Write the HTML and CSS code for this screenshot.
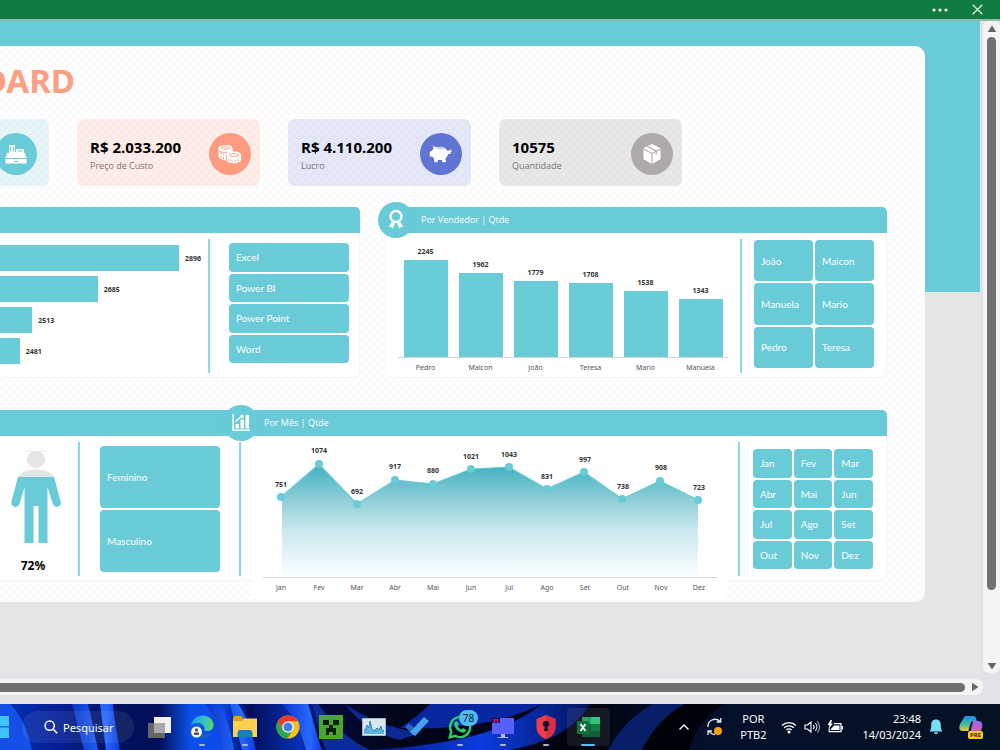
FILE: index.html
```html
<!DOCTYPE html>
<html lang="pt-BR">
<head>
<meta charset="utf-8">
<title>Dashboard</title>
<link rel="stylesheet" href="styles.css">
</head>
<body>
<header class="titlebar">
  <button class="win-btn" aria-label="Mais"><svg width="16" height="4" viewBox="0 0 16 4"><g fill="#fff"><circle cx="2" cy="2" r="1.6"/><circle cx="8" cy="2" r="1.6"/><circle cx="14" cy="2" r="1.6"/></g></svg></button>
  <button class="win-btn" aria-label="Fechar"><svg width="11" height="11" viewBox="0 0 11 11"><path d="M.7.7l9.6 9.6M10.3.7L.7 10.3" stroke="#d5eadd" stroke-width="1.4"/></svg></button>
</header>

<div class="workspace">
  <main class="sheet">
    <div class="board">
      <h1 class="title"><span>DARD</span></h1>

      <section class="kpis">
        <article class="kpi kpi-teal">
          <span class="kpi-icon"><svg width="22" height="20" viewBox="0 0 22 20"><path fill="#fff" d="M2 9h2V1h6v7h1V5h8v4h1l1.500 5H.5zM.5 15h21v4.500H.5z"/><path stroke="#69cad8" fill="none" d="M9 17.500h4M5.500 2.500v5M8.500 2.500v5M12.500 7h5"/></svg></span>
        </article>
        <article class="kpi kpi-coral">
          <div><strong class="kpi-value">R$ 2.033.200</strong><span class="kpi-label">Preço de Custo</span></div>
          <span class="kpi-icon"><svg width="24" height="20" viewBox="0 0 24 20"><path fill="#fff" d="M.5 4C.5 2.200 4 1 7.500 1s7 1.200 7 3v3.500c4-.5 8.500.5 8.500 3.200V16c0 2-3.500 3.200-7.500 3.200-3 0-6-1-7-2.700C4 16 .5 14 .5 12z"/><path fill="none" stroke="#fc9b7f" stroke-width=".9" d="M3 4c0-1.500 9-1.500 9 0s-9 1.500-9 0zM11 11c0-1.800 9.500-1.800 9.500 0s-9.500 1.800-9.500 0zM1 7c2 1.500 5 1.800 8 1.300M8.500 10.500v6M3 8.500v2M5.500 9.500v2M11 15v2M14 16v2M17 16v2M20 15v2M3 12v2M5.500 13v2"/></svg></span>
        </article>
        <article class="kpi kpi-blue">
          <div><strong class="kpi-value">R$ 4.110.200</strong><span class="kpi-label">Lucro</span></div>
          <span class="kpi-icon"><svg width="24" height="20" viewBox="0 0 24 20"><path fill="#fff" d="M4 2l4 1.500C11 2 16 2.500 18 6.500h2.500c.7-1.500 2-1 1.500 0 1 .2 1 1 0 1.300L21 10h-2c-.5 2.500-1.500 3.500-2.500 4.200l.5 4h-3.500l-.5-2.200H9l-.5 2.200H5.500L5 14.500 3 12.500H.8V7.800L2.500 7 4.500 4.700z"/><path d="M9 4.500c2-.9 4-.7 5.500.4" fill="none" stroke="#6074d1" stroke-width=".8"/></svg></span>
        </article>
        <article class="kpi kpi-gray">
          <div><strong class="kpi-value">10575</strong><span class="kpi-label">Quantidade</span></div>
          <span class="kpi-icon"><svg width="20" height="22" viewBox="0 0 20 22"><path fill="#fff" d="M10 1l8.500 4.200v11L10 21 1.500 16.200v-11z"/><path d="M1.500 6L10 10.500 18.500 6M10 10.500V21M5.500 3.500l8.700 4.700v3.500" fill="none" stroke="#aeaaa9" stroke-width="1.100"/></svg></span>
        </article>
      </section>

      <section class="row row-top">
        <article class="panel">
          <div class="panel-head"></div>
          <div class="panel-body">
            <div class="hbars">
              <div class="hbar"><i style="width:86%"></i><b>2896</b></div>
              <div class="hbar"><i style="width:47%"></i><b>2685</b></div>
              <div class="hbar"><i style="width:15.500%"></i><b>2513</b></div>
              <div class="hbar"><i style="width:9.500%"></i><b>2481</b></div>
            </div>
            <span class="divider"></span>
            <div class="slicer slicer-products">
              <button>Excel</button><button>Power BI</button><button>Power Point</button><button>Word</button>
            </div>
          </div>
        </article>

        <article class="panel">
          <div class="panel-head">
            <span class="badge"><svg width="18" height="22" viewBox="0 0 18 22"><circle cx="9" cy="7.500" r="5.500" fill="none" stroke="#fff" stroke-width="2.400"/><path fill="#fff" d="M4.500 13l3.300 1.800-2.300 5-1.200-2.100-2.500.4zM13.500 13l-3.300 1.800 2.300 5 1.200-2.100 2.500.4z"/></svg></span>
            <h2>Por Vendedor | Qtde</h2>
          </div>
          <div class="panel-body">
            <div class="vchart">
              <div class="plot">
                <div class="col"><b>2245</b><i style="height:97px"></i></div>
                <div class="col"><b>1962</b><i style="height:84px"></i></div>
                <div class="col"><b>1779</b><i style="height:76px"></i></div>
                <div class="col"><b>1708</b><i style="height:74px"></i></div>
                <div class="col"><b>1538</b><i style="height:66px"></i></div>
                <div class="col"><b>1343</b><i style="height:58px"></i></div>
              </div>
              <div class="cats"><span>Pedro</span><span>Maicon</span><span>João</span><span>Teresa</span><span>Mario</span><span>Manuela</span></div>
            </div>
            <span class="divider"></span>
            <div class="slicer slicer-sellers">
              <button>João</button><button>Maicon</button><button>Manuela</button><button>Mario</button><button>Pedro</button><button>Teresa</button>
            </div>
          </div>
        </article>
      </section>

      <section class="row row-bottom">
        <article class="panel panel-gender">
          <div class="panel-head"></div>
          <div class="panel-body">
            <div class="person">
              <svg width="50" height="94" viewBox="0 0 50 94"><path d="M14 1.200h22" stroke="#ededed"/><ellipse cx="25" cy="9.500" rx="9" ry="8.500" fill="#e5e5e5"/><path d="M7 27c5-10 31-10 36 0z" fill="#e5e5e5"/><path fill="#69cad8" d="M7 27h36l6.800 25c1 5-5.800 7-8 2L36.500 37v56H27.500V56h-5v37H13.500V37L8.500 54c-2 5-9 3-8.200-2z"/></svg>
              <strong>72%</strong>
            </div>
            <span class="divider"></span>
            <div class="slicer slicer-gender"><button>Feminino</button><button>Masculino</button></div>
            <span class="divider"></span>
          </div>
        </article>

        <article class="panel panel-month">
          <div class="panel-head">
            <span class="badge"><svg width="18" height="18" viewBox="0 0 18 18"><path d="M1.200 0v16.300H18" fill="none" stroke="#fff" stroke-width="1.600"/><path fill="#fff" d="M3.500 10h3.500v4.500H3.500zM8.500 5.500H12v9H8.500zM13.500 1H17v13.500h-3.500z"/><path d="M3.500 7.500L10 2" stroke="#fff" stroke-width="1.100"/><circle cx="10" cy="2.300" r="1.700" fill="#fff"/></svg></span>
            <h2>Por Mês | Qtde</h2>
          </div>
          <div class="panel-body">
            <svg class="area-chart" viewBox="253 436 474 162" role="img" aria-label="Quantidade por mês">
              <defs><linearGradient id="fade" gradientUnits="userSpaceOnUse" x1="0" y1="464" x2="0" y2="577"><stop offset="0" stop-color="#3fb0c1"/><stop offset=".3" stop-color="#8accd6"/><stop offset=".6" stop-color="#cdeaef"/><stop offset="1" stop-color="#fafeff"/></linearGradient></defs>
              <path fill="url(#fade)" d="M282 577V497L319 464l38 40 38-24 38 4 38-15 38-2 38 22 37-17 38 27 38-18 38 19V577z"/>
              <path fill="none" stroke="#69cad8" stroke-width="1.200" d="M281 497L319 464l38 40 38-24 38 4 38-15 38-2 38 22 37-17 38 27 38-18 38 19"/>
              <path d="M263 577.500h454" stroke="#d4d4d4"/>
              <g fill="#69cad8"><circle cx="281" cy="497" r="4"/><circle cx="319" cy="464" r="4"/><circle cx="357" cy="504" r="4"/><circle cx="395" cy="480" r="4"/><circle cx="433" cy="484" r="4"/><circle cx="471" cy="469" r="4"/><circle cx="509" cy="467" r="4"/><circle cx="547" cy="489" r="4"/><circle cx="584" cy="472" r="4"/><circle cx="622" cy="499" r="4"/><circle cx="660" cy="481" r="4"/><circle cx="698" cy="500" r="4"/></g>
              <g class="vals"><text x="281" y="487">751</text><text x="319" y="453">1074</text><text x="357" y="494">692</text><text x="395" y="469">917</text><text x="433" y="473">880</text><text x="471" y="459">1021</text><text x="509" y="457">1043</text><text x="547" y="479">831</text><text x="585" y="462">997</text><text x="623" y="489">738</text><text x="661" y="470">908</text><text x="699" y="490">723</text></g>
              <g class="months"><text x="281" y="590">Jan</text><text x="319" y="590">Fev</text><text x="357" y="590">Mar</text><text x="395" y="590">Abr</text><text x="433" y="590">Mai</text><text x="471" y="590">Jun</text><text x="509" y="590">Jul</text><text x="547" y="590">Ago</text><text x="585" y="590">Set</text><text x="623" y="590">Out</text><text x="661" y="590">Nov</text><text x="699" y="590">Dez</text></g>
            </svg>
            <span class="divider"></span>
            <div class="slicer slicer-months">
              <button>Jan</button><button>Fev</button><button>Mar</button><button>Abr</button><button>Mai</button><button>Jun</button><button>Jul</button><button>Ago</button><button>Set</button><button>Out</button><button>Nov</button><button>Dez</button>
            </div>
          </div>
        </article>
      </section>
    </div>
  </main>
  <div class="vscroll">
    <svg width="10" height="8" viewBox="0 0 10 8"><path fill="#666" d="M5 .5L9.300 7H.7z"/></svg>
    <div class="vtrack"><span class="vthumb"></span></div>
    <svg width="10" height="8" viewBox="0 0 10 8"><path fill="#666" d="M5 7.500L9.300 1H.7z"/></svg>
  </div>
</div>
<div class="hscroll">
  <div class="htrack"><span class="hthumb"></span><svg width="8" height="10" viewBox="0 0 8 10"><path fill="#666" d="M7.500 5L1 9.300V.7z"/></svg></div>
</div>

<footer class="taskbar">
  <svg class="wallpaper" viewBox="0 0 1000 46" preserveAspectRatio="none" aria-hidden="true">
    <defs>
      <linearGradient id="wp" x1="0" x2="1" y1="0" y2="0"><stop offset="0" stop-color="#0632b8"/><stop offset=".06" stop-color="#031e92"/><stop offset=".12" stop-color="#02115c"/><stop offset=".16" stop-color="#02105c"/><stop offset=".19" stop-color="#0b50e8"/><stop offset=".22" stop-color="#0a4bea"/><stop offset=".25" stop-color="#020e58"/><stop offset=".3" stop-color="#0830b8"/><stop offset=".32" stop-color="#020a3c"/><stop offset=".4" stop-color="#020618"/><stop offset=".5" stop-color="#010520"/><stop offset=".57" stop-color="#00020c"/><stop offset=".7" stop-color="#03102a"/><stop offset="1" stop-color="#041224"/></linearGradient>
      <linearGradient id="ray" x1="0" x2="1" y1="0" y2="0"><stop offset="0" stop-color="#0a36c8"/><stop offset=".7" stop-color="#2868ff"/><stop offset="1" stop-color="#0b3cd8"/></linearGradient>
      <linearGradient id="sweep" x1="0" x2="1" y1="0" y2="0"><stop offset="0" stop-color="#031a80"/><stop offset=".5" stop-color="#0a3ce0"/><stop offset="1" stop-color="#03145a"/></linearGradient>
    </defs>
    <path fill="url(#wp)" d="M0 0h1000v46H0z"/>
    <path fill="#1450e8" d="M0 0h10c12 12 18 28 22 46H0z"/>
    <path fill="url(#ray)" d="M72 0h16c4 14 6 30 10 46H84zM100 0h13c1 15 4 30 7 46h-14z"/>
    <path fill="url(#ray)" d="M206 0h14c8 14 11 30 14 46h-12c-2-20-8-34-16-46zM230 0h8c8 10 14 28 18 46h-14z"/>
    <path fill="url(#ray)" d="M282 0h26c5 14 8 30 14 46h-16c-5-18-10-32-24-46z"/>
    <path fill="#0b2d9b" d="M312 0h6c14 20 30 36 52 46h-44c-6-14-9-30-14-46z"/>
    <path fill="#0a2a92" d="M345 0c20 14 44 24 75 29l-20 7c-26-7-41-18-55-36z"/>
    <path fill="url(#sweep)" d="M370 46c60-4 130-12 172-46h48c-15 25-40 38-80 46z"/>
    <path fill="#0726a0" d="M430 0h112c-40 20-90 26-142 24 12-8 22-16 30-24z"/>
    <path fill="#061f68" d="M608 46c12-22 26-36 45-46h32c-20 10-35 28-43 46z"/>
    <path fill="#000209" d="M642 46c12-22 25-36 43-46h40c-18 10-30 26-36 46z"/>
  </svg>
  <button class="start" aria-label="Iniciar"><svg width="9" height="22" viewBox="0 0 9 22"><path fill="#3fc3fb" d="M0 0h9v10.300H0zM0 11.500h9V22H0z"/></svg></button>
  <label class="search"><svg width="14" height="14" viewBox="0 0 14 14"><circle cx="5.700" cy="5.700" r="4.600" fill="none" stroke="#fff" stroke-width="1.500"/><path d="M9.200 9.200l4 4" stroke="#fff" stroke-width="1.600"/></svg><input type="text" placeholder="Pesquisar" aria-label="Pesquisar"></label>
  <nav class="apps">
    <button class="app" aria-label="Visão de tarefas"><svg width="24" height="24" viewBox="0 0 24 24"><path fill="#f1f1f1" d="M7 2h17v16H7z"/><path fill="#666" d="M1 8h17v15H1z"/><path fill="#a9a9a9" d="M7 8h11v10H7z"/></svg></button>
    <button class="app open" aria-label="Edge"><svg width="24" height="24" viewBox="0 0 24 24"><defs><linearGradient id="ed" x1="0" x2="1"><stop offset="0" stop-color="#1b9de2"/><stop offset=".6" stop-color="#34c1c5"/><stop offset="1" stop-color="#65d75b"/></linearGradient></defs><path fill="#1067b8" d="M1 12c0 7 5 11.500 11 11.500 4 0 8-2 9.500-5-5 2-11 0-11-5l1-5z"/><path fill="url(#ed)" d="M1 11C2 4 7 .5 12.500.5 19 .5 23.500 5 23.500 10c0 5-4 6.500-7 6-4-.6-1-2-2.500-4.500C11.500 7 4 7 1 11z"/><circle cx="6.500" cy="17" r="5.500" fill="#f5f5f5"/><circle cx="6.500" cy="15" r="1.700" fill="#555"/><path fill="#555" d="M4 17.500h5v2.500H4z"/></svg></button>
    <button class="app open" aria-label="Explorador"><svg width="24" height="24" viewBox="0 0 24 24"><path fill="#e2a112" d="M0 2.500L1 1h7l2.500 3v4H0z"/><path fill="#ffd152" d="M0 6h9l2-2.500h13V22H0z"/><path fill="#147fc5" d="M4.500 22v-4.500L6 15h12l1.500 2.500V22z"/></svg></button>
    <button class="app" aria-label="Chrome"><svg width="24" height="24" viewBox="0 0 24 24"><circle cx="12" cy="12" r="11.500" fill="#fbc116"/><path fill="#e33b2e" d="M2 6.200A11.500 11.500 0 0 1 22 6.200H12L7 15z"/><path fill="#2da44f" d="M2 6.200a11.500 11.500 0 0 0 9.500 17.300L17 14.500l-10 .5z"/><circle cx="12" cy="12" r="5.800" fill="#fff"/><circle cx="12" cy="12" r="4.500" fill="#3e7ff0"/></svg></button>
    <button class="app" aria-label="Minecraft"><svg width="24" height="24" viewBox="0 0 24 24"><path fill="#4ba52f" d="M0 0h24v24H0z"/><path fill="#08200a" d="M4 5h6v5H4zM14 5h6v5h-6zM10 10h4v3h3v7h-3v-3h-4v3H7v-7h3z"/></svg></button>
    <button class="app" aria-label="Monitor"><svg width="24" height="24" viewBox="0 0 24 24"><path fill="#d9e7ed" stroke="#a9b8c0" d="M.5 3.500h23v17H.5z"/><path fill="#5cb4e5" d="M2 19v-4l2-1 1-4 2 3 1-7 2 8 2 2 3-3 2 2 2-4 1 4 2 1v3z"/><path stroke="#2785bd" fill="none" d="M2 15l2-1 1-4 2 3 1-7 2 8 2 2 3-3 2 2 2-4 1 4 2 1"/></svg></button>
    <button class="app" aria-label="To Do"><svg width="24" height="24" viewBox="0 0 24 24"><path fill="#2564c0" d="M0 12l4-4 8 7-4 5z"/><path fill="#47a2ee" d="M5 17L19 2l5 4L10 21z"/></svg></button>
    <button class="app open" aria-label="WhatsApp"><svg width="24" height="24" viewBox="0 0 24 24"><path fill="none" stroke="#28d366" stroke-width="2.400" d="M1.800 22.300l1.500-5.600A10 10 0 1 1 7.300 20.800z"/><path fill="#28d366" d="M7.500 6.500h2l1.300 3-1.200 1.600c1 1.800 2.200 2.800 4 3.500l1.300-1.500 3 1.500c0 3-2 3.500-4 3C10 16.500 7 13.500 6.200 9.500c0-1.500.5-2.500 1.300-3z"/></svg><span class="count">78</span></button>
    <button class="app open" aria-label="Área remota"><svg width="24" height="24" viewBox="0 0 24 24"><path fill="#5560ff" d="M1 3h22v16H1z"/><path fill="#b1bcc9" d="M10 19h4v3h3v1H7v-1h3z"/><path fill="#2b133c" d="M1 3h8v5H1z"/><path stroke="#f30db1" stroke-width="1.500" d="M3.500 4v3.500M6.500 4v3.500"/></svg></button>
    <button class="app open" aria-label="Segurança"><svg width="24" height="24" viewBox="0 0 24 24"><path fill="#ef3c4b" d="M12 0l9.500 4v8c0 6-4 10-9.500 12C6.500 22 2.500 18 2.500 12V4z"/><path fill="#d92e43" d="M12 0l9.500 4v8c0 6-4 10-9.500 12z"/><path fill="#180d2e" d="M12 6a3 3 0 0 1 1.300 5.800L14 16h-4l.7-4.200A3 3 0 0 1 12 6z"/></svg></button>
    <button class="app open active" aria-label="Excel"><svg width="24" height="24" viewBox="0 0 24 24"><path fill="#21a366" d="M5 2h18v7H5z"/><path fill="#33c481" d="M14 2h9v7h-9z"/><path fill="#185c37" d="M5 9h18v13H5z"/><path fill="#107c41" d="M14 9h9v7h-9z"/><path fill="#0d703a" d="M0 6h12v13H0z"/><path stroke="#fff" stroke-width="1.800" d="M3.500 9l5 7M8.500 9l-5 7"/></svg></button>
  </nav>
  <div class="tray">
    <button aria-label="Ícones ocultos"><svg width="12" height="8" viewBox="0 0 12 8"><path d="M1.500 6.500L6 2l4.500 4.500" fill="none" stroke="#fff" stroke-width="1.400"/></svg></button>
    <button aria-label="Atualização"><svg width="18" height="20" viewBox="0 0 18 20"><path d="M2 10a7 7 0 0 1 12-5.500M14.700 1v4h-4M9 17.500a7 7 0 0 1-6-3.500M2 18v-4h4" fill="none" stroke="#eee" stroke-width="1.300"/><circle cx="12" cy="14" r="4" fill="#ff9c14"/></svg></button>
    <button class="lang">POR<br>PTB2</button>
    <button class="status" aria-label="Rede, som e bateria">
      <svg width="16" height="14" viewBox="0 0 16 14"><g fill="none" stroke="#fff" stroke-width="1.200"><path d="M1 5.500a10 10 0 0 1 14 0M3.200 7.800a7 7 0 0 1 9.600 0M5.400 10a4 4 0 0 1 5.200 0"/></g><circle cx="8" cy="12" r="1.500" fill="#fff"/></svg>
      <svg width="16" height="14" viewBox="0 0 16 14"><g fill="none" stroke="#fff" stroke-width="1.100"><path d="M1 5h2.500L7 2v10L3.500 9H1zM9.300 5a3 3 0 0 1 0 4M11.300 3a6 6 0 0 1 0 8"/><path stroke="#8d98a8" d="M13.300 1.500a8 8 0 0 1 0 11"/></g></svg>
      <svg width="17" height="14" viewBox="0 0 17 14"><path fill="none" stroke="#fff" stroke-width="1.200" d="M7 3.600h7v8H2.200V8.500"/><path fill="#fff" d="M4 9l3-3.500h5.500V10H4zM14.500 6H16v3.500h-1.500z"/><path fill="#fff" d="M3.500 0L.5 5h2L1.500 9 6 3.500H4L5 0z"/></svg>
    </button>
    <button class="clock">23:48<br>14/03/2024</button>
    <button aria-label="Notificações"><svg width="14" height="16" viewBox="0 0 14 16"><path fill="#76dff7" d="M7 .5c-3 0-4.800 2.200-4.800 5v3L.8 12.500h12.400l-1.400-4v-3C11.800 2.700 10 .5 7 .5zM5 13.300h4c0 2.500-4 2.500-4 0z"/></svg></button>
    <button class="copilot" aria-label="Copilot"><svg width="24" height="24" viewBox="0 0 24 24"><defs><linearGradient id="c1" x2="0" y2="1"><stop offset="0" stop-color="#2489ea"/><stop offset=".55" stop-color="#42bba0"/><stop offset="1" stop-color="#f4ca39"/></linearGradient><linearGradient id="c2" x2="0" y2="1"><stop offset="0" stop-color="#9b67ee"/><stop offset="1" stop-color="#f05592"/></linearGradient></defs><path fill="url(#c1)" d="M6 1h9c2 0 2 3 3 5h-4c-2 0-3 3-4.500 10H4c-4 0-4-3-3-7z"/><path fill="url(#c2)" d="M14 6h5c4 0 5 3 4 7l-2 5c-1 3-3 4-6 4H9c2 0 2-4 5-16z"/></svg><span class="pre">PRE</span></button>
  </div>
</footer>
</body>
</html>
```
FILE: styles.css
```css
:root {
  --teal: #69cad8;
  --ui: "Noto Sans", "Open Sans", sans-serif;
  --label: "Open Sans", "Noto Sans", sans-serif;
}
* { box-sizing: border-box; }
body {
  margin: 0;
  height: 100vh;
  display: flex;
  flex-direction: column;
  overflow: hidden;
  font-family: var(--ui);
  background: #e2e3e8;
}
button { border: 0; padding: 0; margin: 0; background: none; color: inherit; font: inherit; }
svg { display: block; flex: none; }

.titlebar {
  flex: none;
  height: 21px;
  display: flex;
  justify-content: flex-end;
  align-items: center;
  gap: 24px;
  padding-right: 17px;
  background: #107c41;
  border-bottom: 2px solid #8fbcae;
}

.workspace { flex: 1; min-height: 0; display: flex; }
.sheet {
  flex: 1;
  min-width: 0;
  padding: 25px 55px 0 0;
  margin-right: 3px;
  background: linear-gradient(var(--teal) 271px, #e5e5e5 271px);
}
.board {
  padding: 15px 0 21px;
  border-radius: 0 10px 10px 0;
  background: #fff url("data:image/svg+xml,%3Csvg xmlns='http://www.w3.org/2000/svg' width='8' height='8'%3E%3Cpath d='M0 8L8 0M0 3l3 3M4-1l4 4' fill='none' stroke='%23f4f4f4'/%3E%3C/svg%3E");
}
.title {
  margin: 0 0 18px;
  width: 75px;
  height: 40px;
  display: flex;
  justify-content: flex-end;
  overflow: hidden;
  font-size: 33px;
  line-height: 40px;
  font-weight: 700;
  color: #fe9e82;
}

.kpis {
  display: grid;
  grid-template-columns: minmax(0, 49fr) repeat(3, minmax(0, 183fr));
  gap: 28px;
  padding-right: 243px;
}
.kpi {
  height: 67px;
  display: flex;
  align-items: center;
  justify-content: space-between;
  padding: 3px 9px 0 13px;
  border-radius: 7px;
}
.kpi-teal { background: #69cad82b; border-radius: 0 7px 7px 0; justify-content: flex-end; padding: 3px 12px 0 0; }
.kpi-coral { background: #fc9b7f2e; }
.kpi-blue { background: #6074d12b; }
.kpi-gray { background: #aeaaa944; }
.kpi-value { display: block; padding-top: 3px; font-family: var(--label); font-size: 15px; line-height: 20px; white-space: nowrap; color: #000; }
.kpi-label { display: block; font-family: var(--label); font-size: 9px; line-height: 17px; color: #757575; }
.kpi-icon {
  flex: none;
  width: 42px;
  height: 42px;
  border-radius: 50%;
  display: grid;
  place-items: center;
}
.kpi-teal .kpi-icon { background: var(--teal); }
.kpi-coral .kpi-icon { background: #fc9b7f; }
.kpi-blue .kpi-icon { background: #6074d1; }
.kpi-gray .kpi-icon { background: #aeaaa9; }

.row { display: grid; padding-right: 38px; }
.row-top { grid-template-columns: 360fr 501fr; gap: 26px; margin-top: 21px; }
.row-bottom { grid-template-columns: 241fr 646fr; margin-top: 32px; }
.panel { min-width: 0; }
.panel-head {
  position: relative;
  height: 26px;
  padding-left: 35px;
  background: var(--teal);
  border-radius: 0 5px 0 0;
}
.panel-gender .panel-head { border-radius: 0; }
.panel-month .panel-head { padding-left: 23px; }
.panel-head h2 { margin: 0; font-family: var(--label); font-size: 9px; line-height: 25px; font-weight: 400; color: #fff; }
.badge {
  position: absolute;
  left: -8px;
  top: -5px;
  width: 36px;
  height: 36px;
  display: grid;
  place-items: center;
  border-radius: 50%;
  background: var(--teal);
}
.panel-month .badge { left: -18px; }
.panel-body {
  display: flex;
  height: 145px;
  background: #fff;
  border: solid #f4f4f4;
  border-width: 0 1px 1px 0;
  border-radius: 0 0 7px 7px;
}
.panel-gender .panel-body { border-right: 0; border-radius: 0; }
.divider { flex: none; width: 2px; margin: 6px 0 4px; background: #87d9e4; }

.hbars { flex: 1; display: flex; flex-direction: column; gap: 5px; padding-top: 12px; font-size: 7px; color: #333; }
.hbar { display: flex; align-items: center; gap: 6px; height: 26px; }
.hbar i { height: 100%; background: var(--teal); }

.vchart { flex: 1; padding: 0 12px; font-size: 7px; line-height: 10px; }
.plot { height: 125px; display: flex; align-items: flex-end; border-bottom: 1px solid #d4d4d4; }
.col { flex: 1; display: flex; flex-direction: column; align-items: center; gap: 3px; color: #333; }
.col i { width: 80%; background: var(--teal); }
.cats { display: flex; padding-top: 5px; color: #555; }
.cats span { flex: 1; text-align: center; }

.slicer { flex: none; width: 120px; display: grid; font-family: Lato, var(--ui); font-size: 10px; color: #fff; }
.slicer button { padding-left: 7px; text-align: left; border-radius: 4px; background: var(--teal); }
.slicer-products { height: 120px; margin: 10px 10px 0 19px; gap: 2px; }
.slicer-sellers { height: 128px; margin: 7px 12px 0; grid-template-columns: 1fr 1fr; gap: 2px; }
.slicer-gender { height: 126px; margin: 10px 19px 0 20px; gap: 2px; }
.slicer-months { height: 120px; margin: 13px 13px 0; grid-template-columns: 1fr 1fr 1fr; gap: 2px; }

.person { flex: 1; display: flex; flex-direction: column; align-items: center; padding: 14px 0 0; }
.person svg { margin-left: -6px; }
.person strong { margin: 12px 12px 0 0; font-size: 12px; line-height: 20px; }

.area-chart { flex: 1 1 0; min-width: 0; height: 162px; margin: 0 11px 0 12px; background: #fff; }
.vals, .months { font-size: 7px; text-anchor: middle; fill: #333; }
.vals { font-weight: 700; }
.months { fill: #555; }

.vscroll {
  flex: none;
  width: 17px;
  display: flex;
  flex-direction: column;
  align-items: center;
  padding: 4px 0 3px;
  gap: 4px;
  background: #f4f4f4;
  border-radius: 6px;
}
.vtrack { flex: 1; width: 9px; }
.vthumb { display: block; height: 89%; border-radius: 5px; background: #707070; }
.hscroll { flex: none; padding: 6px 17px 9px 0; background: #e2e3e8; }
.htrack { display: flex; align-items: center; gap: 6px; height: 16px; padding-right: 4px; background: #f4f4f4; border-radius: 0 7px 7px 0; }
.hthumb { flex: 1; height: 9px; border-radius: 0 5px 5px 0; background: #707070; }

.taskbar { flex: none; position: relative; height: 46px; display: flex; align-items: center; color: #fff; }
.taskbar > * { position: relative; }
.taskbar .wallpaper { position: absolute; inset: 0; width: 100%; height: 100%; }
.search {
  display: flex;
  align-items: center;
  gap: 5px;
  width: 112px;
  height: 32px;
  margin: 0 3px 0 13px;
  padding: 0 8px 0 22px;
  border-radius: 16px;
  background: #ffffff14;
}
.search input { width: 62px; padding: 0; border: 0; background: none; font: 11px var(--ui); color: #fff; }
.search input::placeholder { color: #fff; opacity: 1; }
.apps { display: flex; }
.app { position: relative; width: 43px; height: 38px; display: grid; place-items: center; }
.app.open::after { content: ""; position: absolute; bottom: 0; left: 19px; width: 6px; height: 2px; border-radius: 1px; background: #a9b4d0; }
.app.active { background: #ffffff14; border-radius: 4px; }
.app.active::after { left: 14px; width: 14px; background: #4cc2ff; }
.count {
  position: absolute;
  left: 21px;
  top: 2px;
  width: 19px;
  height: 16px;
  border-radius: 8px;
  background: #4cbcf5;
  color: #07182c;
  font-size: 10px;
  line-height: 16px;
  text-align: center;
}
.tray { margin-left: auto; display: flex; align-items: center; padding-right: 17px; font-size: 11px; line-height: 16px; }
.lang { margin: 0 15px 0 16px; text-align: center; }
.tray > :nth-child(2) { margin-left: 16px; }
.status { display: flex; gap: 7px; }
.clock { margin: 0 8px 0 18px; text-align: right; }
.copilot { position: relative; margin-left: 16px; }
.pre { position: absolute; right: 0; bottom: 0; padding: 0 2px; border-radius: 2px; background: #ffc91c; color: #3c2a00; font-size: 6px; line-height: 8px; font-weight: 700; }
```
